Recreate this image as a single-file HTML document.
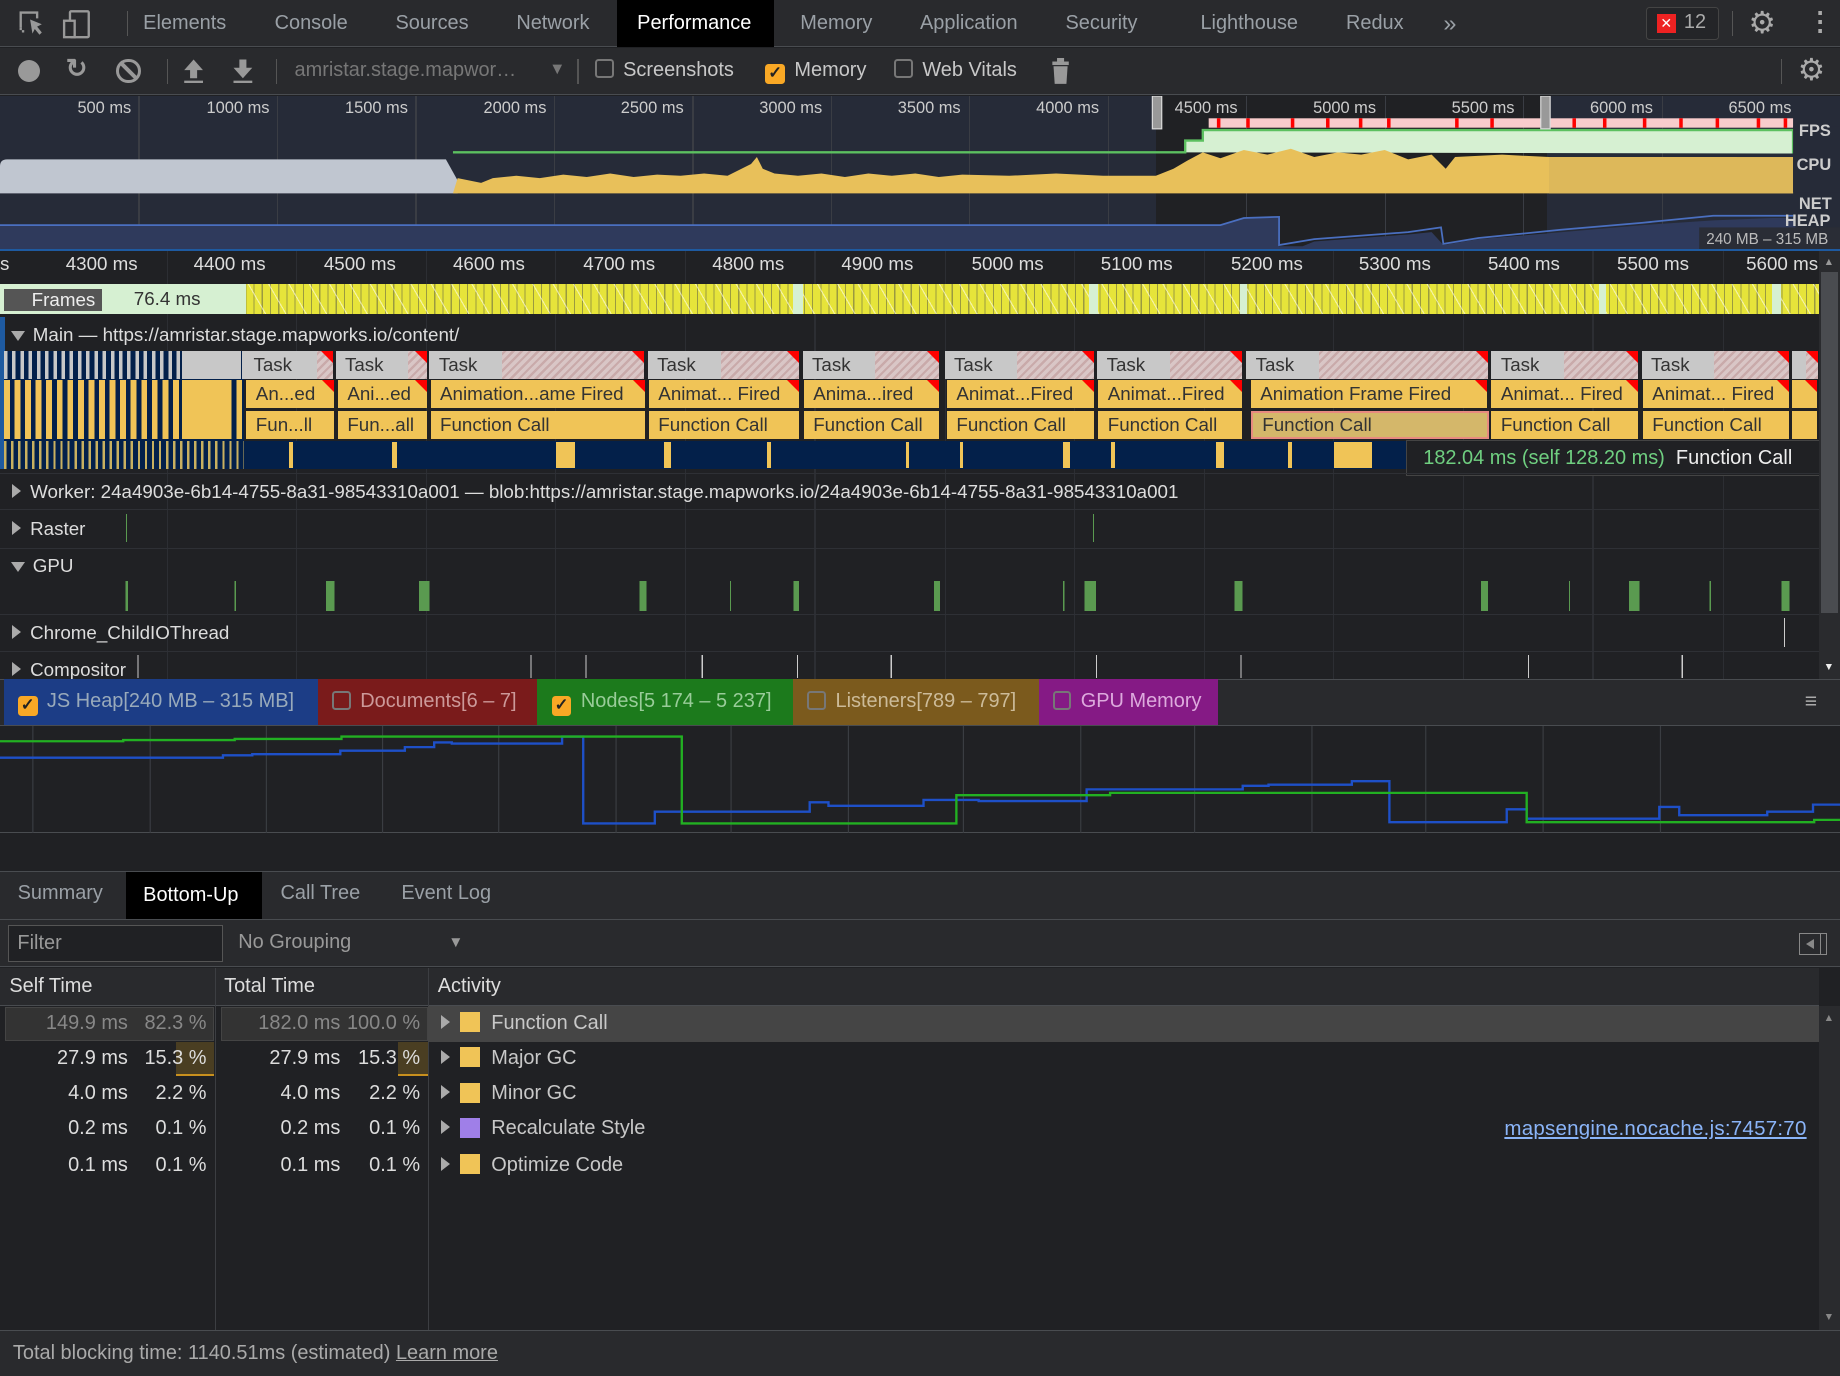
<!DOCTYPE html>
<html><head><meta charset="utf-8"><style>
*{box-sizing:border-box;margin:0;padding:0}
html,body{width:1840px;height:1376px;overflow:hidden;background:#202124}
#w{zoom:1.17347;width:1568px;height:1173px;position:relative;font-family:"Liberation Sans",sans-serif;color:#c8c8c8;font-size:17px;background:#202124;overflow:hidden}
.a{position:absolute;white-space:nowrap}
.tb{background:#292a2d}
.tab{position:absolute;top:0;height:40px;line-height:40px;color:#9aa0a6;font-size:17px}
.rl{position:absolute;font-size:14px;color:#ccc}
.vl{position:absolute;width:1px;background:#3a3d44}
.task{position:absolute;top:299px;height:24px;background:repeating-linear-gradient(135deg,#c9aaaa 0 2px,#d9c6c6 2px 5px);border-right:1px solid #202124}
.task span{display:block;width:62px;height:24px;background:#c8c8c8;color:#333;padding-left:8px;line-height:24px;font-size:16px}
.tri{position:absolute;right:0;top:0;width:0;height:0;border-top:11px solid #f00;border-left:11px solid transparent}
.y{position:absolute;height:24px;background:#f0c457;color:#333;font-size:16px;line-height:24px;padding-left:8px;overflow:hidden;border-right:2px solid #202124}
.hdr{position:absolute;left:0;font-size:16px;color:#ddd}
.ar{display:inline-block;width:0;height:0;border-left:8px solid #aaa;border-top:6px solid transparent;border-bottom:6px solid transparent;margin:0 8px 0 10px}
.ad{display:inline-block;width:0;height:0;border-top:9px solid #aaa;border-left:6px solid transparent;border-right:6px solid transparent;margin:0 7px 0 9px}
.cb{display:inline-block;width:16px;height:16px;border:2px solid #777;border-radius:3px;vertical-align:-2px;margin-right:8px}
.ck{display:inline-block;width:17px;height:17px;background:#f9a825;border-radius:3px;vertical-align:-2px;margin-right:8px;color:#222;font-size:14px;line-height:17px;text-align:center;font-weight:bold}
.cnt{position:absolute;top:579px;height:39px;line-height:39px;padding-left:12px;font-size:17px}
.row{position:absolute;left:0;width:1550px;height:30px;line-height:30px}
.num{position:absolute;text-align:right;color:#ddd}
.sq{display:inline-block;width:17px;height:17px;vertical-align:-3px;margin-right:10px}
</style></head><body><div id="w">

<!-- top tab bar -->
<div class="a tb" style="left:0;top:0;width:1568px;height:40px;border-bottom:1px solid #494c50"></div>
<svg class="a" style="left:14px;top:8px" width="80" height="26" viewBox="0 0 80 26"><path d="M4 16V3h14v5" fill="none" stroke="#999" stroke-width="2"/><path d="M4 16v3h4" fill="none" stroke="#999" stroke-width="2" stroke-dasharray="2 2"/><path d="M12 9l10 4-4 2 4 5-2 2-4-5-2 4z" fill="#999"/><rect x="46" y="2" width="16" height="22" rx="1" fill="none" stroke="#999" stroke-width="2"/><rect x="41" y="10" width="9" height="14" fill="#292a2d" stroke="#999" stroke-width="2"/></svg>
<div class="a" style="left:108px;top:9px;width:1px;height:22px;background:#555"></div>
<div class="tab" style="left:122px">Elements</div>
<div class="tab" style="left:234px">Console</div>
<div class="tab" style="left:337px">Sources</div>
<div class="tab" style="left:440px">Network</div>
<div class="tab" style="left:526px;width:134px;background:#000;color:#fff;padding-left:17px">Performance</div>
<div class="tab" style="left:682px">Memory</div>
<div class="tab" style="left:784px">Application</div>
<div class="tab" style="left:908px">Security</div>
<div class="tab" style="left:1023px">Lighthouse</div>
<div class="tab" style="left:1147px">Redux</div>
<div class="tab" style="left:1230px;font-size:20px">»</div>
<div class="a" style="left:1403px;top:6px;width:62px;height:28px;border:1px solid #444;border-radius:3px;background:#242528"></div>
<div class="a" style="left:1412px;top:12px;width:16px;height:16px;background:#e22;color:#fff;font-size:12px;line-height:16px;text-align:center">✕</div>
<div class="a" style="left:1435px;top:9px;font-size:17px;color:#aaa">12</div>
<div class="a" style="left:1476px;top:9px;width:1px;height:22px;background:#555"></div>
<div class="a" style="left:1490px;top:5px;font-size:26px;color:#aaa">⚙</div>
<div class="a" style="left:1540px;top:6px;font-size:22px;color:#aaa;font-weight:bold">⋮</div>

<!-- toolbar -->
<div class="a tb" style="left:0;top:41px;width:1568px;height:40px;border-bottom:1px solid #494c50"></div>
<div class="a" style="left:15px;top:51px;width:19px;height:19px;border-radius:50%;background:#999"></div>
<div class="a" style="left:56px;top:46px;font-size:22px;color:#999;font-weight:bold">↻</div>
<div class="a" style="left:99px;top:50px;width:21px;height:21px;border:3px solid #999;border-radius:50%"><div style="position:absolute;left:6px;top:-2px;width:3px;height:19px;background:#999;transform:rotate(-45deg)"></div></div>
<svg class="a" style="left:150px;top:48px" width="70" height="26"><path d="M15 3l-8 9h5v7h6v-7h5z" fill="#999"/><rect x="7" y="21" width="16" height="2" fill="#999"/><path d="M57 19l-8-9h5V3h6v7h5z" fill="#999"/><rect x="49" y="21" width="16" height="2" fill="#999"/></svg>
<div class="a" style="left:142px;top:50px;width:1px;height:22px;background:#555"></div>
<div class="a" style="left:235px;top:50px;width:1px;height:22px;background:#555"></div>
<div class="a" style="left:251px;top:50px;color:#777">amristar.stage.mapwor…</div>
<div class="a" style="left:468px;top:51px;color:#777;font-size:14px">▼</div>
<div class="a" style="left:492px;top:50px;width:1px;height:22px;background:#555"></div>
<div class="a" style="left:507px;top:50px"><span class="cb"></span>Screenshots</div>
<div class="a" style="left:652px;top:50px"><span class="ck">✓</span>Memory</div>
<div class="a" style="left:762px;top:50px"><span class="cb"></span>Web Vitals</div>
<svg class="a" style="left:895px;top:49px" width="18" height="24"><rect x="6" y="0" width="6" height="3" fill="#999"/><rect x="2" y="3" width="14" height="3" fill="#999"/><path d="M3 7h12l-1 15H4z" fill="#999"/></svg>
<div class="a" style="left:1518px;top:50px;width:1px;height:22px;background:#555"></div>
<div class="a" style="left:1532px;top:45px;font-size:26px;color:#aaa">⚙</div>

<!-- overview -->
<div class="a" style="left:0;top:82px;width:1568px;height:131px;background:#262b38"></div>
<div class="a" style="left:985px;top:82px;width:333px;height:131px;background:#202124"></div>
<div class="vl" style="left:118px;top:82px;height:131px"></div><div class="vl" style="left:236px;top:82px;height:131px"></div><div class="vl" style="left:354px;top:82px;height:131px"></div><div class="vl" style="left:472px;top:82px;height:131px"></div><div class="vl" style="left:590px;top:82px;height:131px"></div><div class="vl" style="left:708px;top:82px;height:131px"></div><div class="vl" style="left:826px;top:82px;height:131px"></div><div class="vl" style="left:944px;top:82px;height:131px"></div><div class="vl" style="left:1062px;top:82px;height:131px"></div><div class="vl" style="left:1180px;top:82px;height:131px"></div><div class="vl" style="left:1298px;top:82px;height:131px"></div><div class="vl" style="left:1416px;top:82px;height:131px"></div>
<div class="rl" style="left:66px;top:84px">500 ms</div><div class="rl" style="left:176px;top:84px">1000 ms</div><div class="rl" style="left:294px;top:84px">1500 ms</div><div class="rl" style="left:412px;top:84px">2000 ms</div><div class="rl" style="left:529px;top:84px">2500 ms</div><div class="rl" style="left:647px;top:84px">3000 ms</div><div class="rl" style="left:765px;top:84px">3500 ms</div><div class="rl" style="left:883px;top:84px">4000 ms</div><div class="rl" style="left:1001px;top:84px">4500 ms</div><div class="rl" style="left:1119px;top:84px">5000 ms</div><div class="rl" style="left:1237px;top:84px">5500 ms</div><div class="rl" style="left:1355px;top:84px">6000 ms</div><div class="rl" style="left:1473px;top:84px">6500 ms</div>
<svg class="a" style="left:0;top:82px" width="1568" height="131">
<rect x="1030" y="19" width="498" height="8" fill="#f8cccc"/>
<g fill="#f00"><rect x="1037" y="19" width="3" height="8"/><rect x="1062" y="19" width="3" height="8"/><rect x="1100" y="19" width="3" height="8"/><rect x="1130" y="19" width="3" height="8"/><rect x="1158" y="19" width="3" height="8"/><rect x="1182" y="19" width="3" height="8"/><rect x="1240" y="19" width="3" height="8"/><rect x="1270" y="19" width="3" height="8"/><rect x="1340" y="19" width="3" height="8"/><rect x="1366" y="19" width="3" height="8"/><rect x="1400" y="19" width="3" height="8"/><rect x="1431" y="19" width="3" height="8"/><rect x="1462" y="19" width="3" height="8"/><rect x="1497" y="19" width="3" height="8"/><rect x="1520" y="19" width="3" height="8"/></g>
<path d="M1010 48V38h15V29h503v20z" fill="#d6f0d2"/>
<path d="M386 48H1010V38h15V29h503v20" fill="none" stroke="#5cc060" stroke-width="2"/>
<path d="M0 60Q0 54 6 54H380L390 72V83H0z" fill="#c0c6d0"/>
<path d="M386 83L390 70 400 72 410 74 420 70 440 68 460 70 480 67 500 69 520 66 540 69 560 67 580 68 600 66 620 68 640 58 645 52 650 62 660 66 680 68 700 66 720 69 740 66 760 68 780 66 800 69 820 67 860 68 900 66 940 68 985 68 1000 62 1012 55 1025 48 1040 53 1060 46 1080 50 1100 45 1120 52 1140 48 1160 50 1180 46 1200 54 1220 50 1232 62 1240 52 1280 50 1320 52 1400 52 1480 52 1495 70 1528 70 1528 83z" fill="#e8c05a"/>
<rect x="1320" y="52" width="208" height="31" fill="#ddb85a"/>
<path d="M0 110H1040L1060 104H1090V128H1110L1120 124 1200 118 1220 116 1230 127 1260 122 1320 117 1400 110 1460 106 1510 104 1530 104V131H0z" fill="#2f3a5c"/>
<path d="M0 110H1040L1060 104 1090 103V127L1120 122 1200 116 1228 112 1230 126 1260 121 1330 114 1400 108 1460 102 1528 102" fill="none" stroke="#4a6fc0" stroke-width="1.5"/>
<rect x="982" y="0" width="8" height="28" fill="#999" stroke="#ddd"/>
<rect x="1313" y="0" width="8" height="28" fill="#999" stroke="#ddd"/>
<rect x="1528" y="26" width="40" height="56" fill="#262b38"/>
<rect x="1448" y="112" width="120" height="19" fill="#2a2d36"/>
</svg>
<div class="a" style="left:1533px;top:104px;font-size:14px;color:#ccc;font-weight:bold">FPS</div>
<div class="a" style="left:1531px;top:133px;font-size:14px;color:#ccc;font-weight:bold">CPU</div>
<div class="a" style="left:1533px;top:166px;font-size:14px;color:#ccc;font-weight:bold">NET</div>
<div class="a" style="left:1521px;top:181px;font-size:14px;color:#ccc;font-weight:bold">HEAP</div>
<div class="a" style="left:1454px;top:197px;font-size:13px;color:#bbb">240 MB – 315 MB</div>
<div class="a" style="left:0;top:212px;width:1568px;height:2px;background:#1e5aa0"></div>

<!-- detail ruler -->
<div class="a" style="left:0;top:214px;width:1550px;height:28px;background:#202124"></div>
<div class="vl" style="left:142px;top:214px;height:366px;background:#2c2e33"></div><div class="vl" style="left:252px;top:214px;height:366px;background:#2c2e33"></div><div class="vl" style="left:363px;top:214px;height:366px;background:#2c2e33"></div><div class="vl" style="left:473px;top:214px;height:366px;background:#2c2e33"></div><div class="vl" style="left:584px;top:214px;height:366px;background:#2c2e33"></div><div class="vl" style="left:694px;top:214px;height:366px;background:#2c2e33"></div><div class="vl" style="left:805px;top:214px;height:366px;background:#2c2e33"></div><div class="vl" style="left:915px;top:214px;height:366px;background:#2c2e33"></div><div class="vl" style="left:1026px;top:214px;height:366px;background:#2c2e33"></div><div class="vl" style="left:1136px;top:214px;height:366px;background:#2c2e33"></div><div class="vl" style="left:1247px;top:214px;height:366px;background:#2c2e33"></div><div class="vl" style="left:1357px;top:214px;height:366px;background:#2c2e33"></div><div class="vl" style="left:1468px;top:214px;height:366px;background:#2c2e33"></div>
<div class="a" style="left:0;top:216px;font-size:16px;color:#ddd">s</div>
<div class="a" style="left:56px;top:216px;font-size:16px;color:#ddd">4300 ms</div><div class="a" style="left:165px;top:216px;font-size:16px;color:#ddd">4400 ms</div><div class="a" style="left:276px;top:216px;font-size:16px;color:#ddd">4500 ms</div><div class="a" style="left:386px;top:216px;font-size:16px;color:#ddd">4600 ms</div><div class="a" style="left:497px;top:216px;font-size:16px;color:#ddd">4700 ms</div><div class="a" style="left:607px;top:216px;font-size:16px;color:#ddd">4800 ms</div><div class="a" style="left:717px;top:216px;font-size:16px;color:#ddd">4900 ms</div><div class="a" style="left:828px;top:216px;font-size:16px;color:#ddd">5000 ms</div><div class="a" style="left:938px;top:216px;font-size:16px;color:#ddd">5100 ms</div><div class="a" style="left:1049px;top:216px;font-size:16px;color:#ddd">5200 ms</div><div class="a" style="left:1158px;top:216px;font-size:16px;color:#ddd">5300 ms</div><div class="a" style="left:1268px;top:216px;font-size:16px;color:#ddd">5400 ms</div><div class="a" style="left:1378px;top:216px;font-size:16px;color:#ddd">5500 ms</div><div class="a" style="left:1488px;top:216px;font-size:16px;color:#ddd">5600 ms</div>

<!-- frames -->
<div class="a" style="left:0;top:242px;width:1550px;height:26px;background:repeating-linear-gradient(90deg,#e6e43a 0 6px,#9a9a40 6px 7px)"></div>
<div class="a" style="left:210px;top:242px;width:1340px;height:26px;background:repeating-linear-gradient(60deg,transparent 0 14px,rgba(255,255,255,.55) 14px 15px)"></div>
<div class="a" style="left:0;top:242px;width:210px;height:26px;background:#d6f0d2"></div>
<div class="a" style="left:3px;top:246px;width:84px;height:19px;background:#555;color:#eee;font-size:16px;line-height:19px;padding-left:24px">Frames</div>
<div class="a" style="left:114px;top:245px;font-size:16px;color:#333">76.4 ms</div>
<div class="a" style="left:676px;top:242px;width:8px;height:26px;background:#d6f0d2"></div><div class="a" style="left:928px;top:242px;width:8px;height:26px;background:#d6f0d2"></div><div class="a" style="left:1057px;top:242px;width:6px;height:26px;background:#d6f0d2"></div><div class="a" style="left:1363px;top:242px;width:6px;height:26px;background:#d6f0d2"></div><div class="a" style="left:1510px;top:242px;width:8px;height:26px;background:#d6f0d2"></div>

<!-- main -->
<div class="a" style="left:0;top:270px;width:4px;height:130px;background:#1e5aa0"></div>
<div class="hdr" style="top:276px"><span class="ad"></span>Main — https://amristar.stage.mapworks.io/content/</div>
<div class="a" style="left:3px;top:299px;width:205px;height:101px;background:#03204a"></div>
<div class="a" style="left:3px;top:299px;width:205px;height:24px;background:repeating-linear-gradient(90deg,#c8c8c8 0 3px,#03204a 3px 7px)"></div>
<div class="a" style="left:155px;top:299px;width:50px;height:24px;background:#c8c8c8"></div>
<div class="a" style="left:3px;top:324px;width:205px;height:50px;background:repeating-linear-gradient(90deg,#f0c457 0 5px,#03204a 5px 9px)"></div>
<div class="a" style="left:155px;top:324px;width:40px;height:50px;background:#f0c457"></div>
<div class="a" style="left:3px;top:376px;width:1200px;height:24px;background:#03204a"></div>
<div class="a" style="left:3px;top:376px;width:205px;height:24px;background:repeating-linear-gradient(90deg,#c8b060 0 2px,#03204a 2px 6px)"></div>

<div class="task" style="left:208px;width:77px"><span>Task</span><i class="tri"></i></div>
<div class="task" style="left:286px;width:79px"><span>Task</span><i class="tri"></i></div>
<div class="task" style="left:366px;width:184px"><span>Task</span><i class="tri"></i></div>
<div class="task" style="left:552px;width:130px"><span>Task</span><i class="tri"></i></div>
<div class="task" style="left:684px;width:117px"><span>Task</span><i class="tri"></i></div>
<div class="task" style="left:805px;width:128px"><span>Task</span><i class="tri"></i></div>
<div class="task" style="left:935px;width:124px"><span>Task</span><i class="tri"></i></div>
<div class="task" style="left:1062px;width:207px"><span>Task</span><i class="tri"></i></div>
<div class="task" style="left:1271px;width:126px"><span>Task</span><i class="tri"></i></div>
<div class="task" style="left:1399px;width:126px"><span>Task</span><i class="tri"></i></div>
<div class="task" style="left:1527px;width:23px"><span style="width:12px;padding:0"></span><i class="tri"></i></div>

<div class="y" style="top:324px;left:210px;width:76px">An...ed<i class="tri"></i></div>
<div class="y" style="top:324px;left:288px;width:78px">Ani...ed<i class="tri"></i></div>
<div class="y" style="top:324px;left:367px;width:184px">Animation...ame Fired<i class="tri"></i></div>
<div class="y" style="top:324px;left:553px;width:130px">Animat... Fired<i class="tri"></i></div>
<div class="y" style="top:324px;left:685px;width:117px">Anima...ired<i class="tri"></i></div>
<div class="y" style="top:324px;left:807px;width:127px">Animat...Fired<i class="tri"></i></div>
<div class="y" style="top:324px;left:936px;width:124px">Animat...Fired<i class="tri"></i></div>
<div class="y" style="top:324px;left:1066px;width:203px">Animation Frame Fired<i class="tri"></i></div>
<div class="y" style="top:324px;left:1271px;width:127px">Animat... Fired<i class="tri"></i></div>
<div class="y" style="top:324px;left:1400px;width:126px">Animat... Fired<i class="tri"></i></div>
<div class="y" style="top:324px;left:1527px;width:23px"><i class="tri"></i></div>

<div class="y" style="top:350px;left:210px;width:76px">Fun...ll</div>
<div class="y" style="top:350px;left:288px;width:78px">Fun...all</div>
<div class="y" style="top:350px;left:367px;width:184px">Function Call</div>
<div class="y" style="top:350px;left:553px;width:130px">Function Call</div>
<div class="y" style="top:350px;left:685px;width:117px">Function Call</div>
<div class="y" style="top:350px;left:807px;width:127px">Function Call</div>
<div class="y" style="top:350px;left:936px;width:124px">Function Call</div>
<div class="y" style="top:350px;left:1066px;width:203px;background:#d4b76a;border:2px solid #e88a80;line-height:20px">Function Call</div>
<div class="y" style="top:350px;left:1271px;width:127px">Function Call</div>
<div class="y" style="top:350px;left:1400px;width:126px">Function Call</div>
<div class="y" style="top:350px;left:1527px;width:23px"></div>

<div class="a" style="left:246px;top:377px;width:4px;height:22px;background:#f0c457"></div><div class="a" style="left:334px;top:377px;width:4px;height:22px;background:#f0c457"></div><div class="a" style="left:474px;top:377px;width:16px;height:22px;background:#f0c457"></div><div class="a" style="left:566px;top:377px;width:6px;height:22px;background:#f0c457"></div><div class="a" style="left:654px;top:377px;width:3px;height:22px;background:#f0c457"></div><div class="a" style="left:772px;top:377px;width:3px;height:22px;background:#f0c457"></div><div class="a" style="left:818px;top:377px;width:3px;height:22px;background:#f0c457"></div><div class="a" style="left:906px;top:377px;width:6px;height:22px;background:#f0c457"></div><div class="a" style="left:947px;top:377px;width:3px;height:22px;background:#f0c457"></div><div class="a" style="left:1036px;top:377px;width:7px;height:22px;background:#f0c457"></div><div class="a" style="left:1098px;top:377px;width:3px;height:22px;background:#f0c457"></div><div class="a" style="left:1137px;top:377px;width:32px;height:22px;background:#f0c457"></div>
<div class="a" style="left:1198px;top:375px;width:362px;height:31px;background:#202124;border:1px solid #444;color:#eee;font-size:17px;line-height:29px;padding-left:14px"><span style="color:#6fcf80">182.04 ms (self 128.20 ms)</span>&nbsp; Function Call</div>

<!-- other tracks -->
<div class="a" style="left:0;top:403px;width:1550px;height:1px;background:#2e3035"></div>
<div class="hdr" style="top:410px"><span class="ar"></span>Worker: 24a4903e-6b14-4755-8a31-98543310a001 — blob:https://amristar.stage.mapworks.io/24a4903e-6b14-4755-8a31-98543310a001</div>
<div class="a" style="left:0;top:434px;width:1550px;height:1px;background:#2e3035"></div>
<div class="hdr" style="top:441px"><span class="ar"></span>Raster</div>
<div class="a" style="left:107px;top:438px;width:1px;height:24px;background:#5a9a50"></div><div class="a" style="left:931px;top:438px;width:1px;height:24px;background:#5a9a50"></div>
<div class="a" style="left:0;top:467px;width:1550px;height:1px;background:#2e3035"></div>
<div class="hdr" style="top:473px"><span class="ad"></span>GPU</div>
<div class="a" style="left:0;top:495px;width:1550px;height:26px;background:linear-gradient(90deg,transparent 107px,#5a9a50 107px 109px,transparent 109px 200px,#5a9a50 200px 201px,transparent 201px 278px,#5a9a50 278px 285px,transparent 285px 357px,#5a9a50 357px 366px,transparent 366px 545px,#5a9a50 545px 551px,transparent 551px 622px,#5a9a50 622px 623px,transparent 623px 676px,#5a9a50 676px 681px,transparent 681px 796px,#5a9a50 796px 801px,transparent 801px 906px,#5a9a50 906px 907px,transparent 907px 924px,#5a9a50 924px 934px,transparent 934px 1052px,#5a9a50 1052px 1059px,transparent 1059px 1262px,#5a9a50 1262px 1268px,transparent 1268px 1337px,#5a9a50 1337px 1338px,transparent 1338px 1388px,#5a9a50 1388px 1397px,transparent 1397px 1457px,#5a9a50 1457px 1458px,transparent 1458px 1518px,#5a9a50 1518px 1525px,transparent 1525px)"></div>
<div class="a" style="left:0;top:523px;width:1550px;height:1px;background:#2e3035"></div>
<div class="hdr" style="top:530px"><span class="ar"></span>Chrome_ChildIOThread</div>
<div class="a" style="left:1520px;top:527px;width:1px;height:24px;background:#ccc"></div>
<div class="a" style="left:0;top:555px;width:1550px;height:1px;background:#2e3035"></div>
<div class="hdr" style="top:562px"><span class="ar"></span>Compositor</div>
<div class="a" style="left:0;top:558px;width:1550px;height:20px;background:linear-gradient(90deg,transparent 117px,#ccc 117px 118px,transparent 118px 452px,#ccc 452px 453px,transparent 453px 499px,#ccc 499px 500px,transparent 500px 598px,#ccc 598px 599px,transparent 599px 679px,#ccc 679px 680px,transparent 680px 759px,#ccc 759px 760px,transparent 760px 934px,#ccc 934px 935px,transparent 935px 1057px,#ccc 1057px 1058px,transparent 1058px 1302px,#ccc 1302px 1303px,transparent 1303px 1433px,#ccc 1433px 1434px,transparent 1434px)"></div>
<div class="a" style="left:1550px;top:214px;width:18px;height:365px;background:#2a2b2e"></div>
<div class="a" style="left:1552px;top:232px;width:14px;height:290px;background:#4a4c50"></div>
<div class="a" style="left:1554px;top:218px;font-size:9px;color:#999">▲</div><div class="a" style="left:1554px;top:563px;font-size:9px;color:#eee">▼</div>

<!-- counters -->
<div class="a tb" style="left:0;top:579px;width:1568px;height:40px;border-top:1px solid #494c50;border-bottom:1px solid #494c50"></div>
<div class="cnt" style="left:3px;width:268px;background:#1c3d86;color:#9ab"><span class="ck">✓</span>JS Heap[240 MB – 315 MB]</div>
<div class="cnt" style="left:271px;width:187px;background:#7a1b1b;color:#c99"><span class="cb"></span>Documents[6 – 7]</div>
<div class="cnt" style="left:458px;width:218px;background:#1c7a1c;color:#9c9"><span class="ck">✓</span>Nodes[5 174 – 5 237]</div>
<div class="cnt" style="left:676px;width:209px;background:#7b5a1d;color:#cb9"><span class="cb"></span>Listeners[789 – 797]</div>
<div class="cnt" style="left:885px;width:153px;background:#851a85;color:#dad"><span class="cb"></span>GPU Memory</div>
<div class="a" style="left:1538px;top:588px;color:#aaa;font-size:18px">≡</div>

<!-- memory graph -->
<div class="a" style="left:0;top:619px;width:1568px;height:91px;background:#202124;border-bottom:1px solid #494c50"></div>
<svg class="a" style="left:0;top:619px" width="1568" height="91">
<g stroke="#3a3d42"><line x1="28" y1="0" x2="28" y2="91"/><line x1="128" y1="0" x2="128" y2="91"/><line x1="227" y1="0" x2="227" y2="91"/><line x1="326" y1="0" x2="326" y2="91"/><line x1="425" y1="0" x2="425" y2="91"/><line x1="525" y1="0" x2="525" y2="91"/><line x1="623" y1="0" x2="623" y2="91"/><line x1="723" y1="0" x2="723" y2="91"/><line x1="821" y1="0" x2="821" y2="91"/><line x1="921" y1="0" x2="921" y2="91"/><line x1="1018" y1="0" x2="1018" y2="91"/><line x1="1118" y1="0" x2="1118" y2="91"/><line x1="1215" y1="0" x2="1215" y2="91"/><line x1="1315" y1="0" x2="1315" y2="91"/><line x1="1415" y1="0" x2="1415" y2="91"/></g>
<path d="M0 27H190V25H215V24H290V21H345V18H370V14H385V15H479V9H497V83H558V73H690V65H706V68H787V63H834V64H926V54H1059V51H1081V50H1152V47H1184V82H1284V71H1301V79H1414V69H1431V76H1506V73H1545V67H1568" fill="none" stroke="#1e50c8" stroke-width="2"/>
<path d="M0 13H105V12H200V11H291V9H581V83H815V59H946V57H1301V82H1546V80H1568" fill="none" stroke="#22b022" stroke-width="2"/>
</svg>

<!-- bottom panel -->
<div class="a tb" style="left:0;top:742px;width:1568px;height:42px;border-top:1px solid #494c50;border-bottom:1px solid #494c50"></div>
<div class="a" style="left:15px;top:752px;color:#9aa0a6">Summary</div>
<div class="a" style="left:107px;top:743px;width:116px;height:40px;background:#000;color:#fff;line-height:40px;padding-left:15px">Bottom-Up</div>
<div class="a" style="left:239px;top:752px;color:#9aa0a6">Call Tree</div>
<div class="a" style="left:342px;top:752px;color:#9aa0a6">Event Log</div>
<div class="a tb" style="left:0;top:784px;width:1568px;height:40px;border-bottom:1px solid #494c50"></div>
<div class="a" style="left:7px;top:788px;width:183px;height:32px;border:1px solid #555;background:#202124;color:#999;line-height:30px;padding-left:7px">Filter</div>
<div class="a" style="left:203px;top:793px;color:#999">No Grouping</div>
<div class="a" style="left:382px;top:796px;color:#999;font-size:13px">▼</div>
<div class="a" style="left:1533px;top:795px;width:24px;height:19px;border:1px solid #888"><div style="position:absolute;right:4px;top:0;width:1px;height:17px;background:#888"></div><div style="position:absolute;left:5px;top:4px;border-right:7px solid #888;border-top:5px solid transparent;border-bottom:5px solid transparent"></div></div>

<div class="a tb" style="left:0;top:825px;width:1550px;height:32px;border-bottom:1px solid #494c50"></div>
<div class="a" style="left:8px;top:831px;color:#ddd">Self Time</div>
<div class="a" style="left:191px;top:831px;color:#ddd">Total Time</div>
<div class="a" style="left:373px;top:831px;color:#ddd">Activity</div>
<div class="a" style="left:183px;top:825px;width:1px;height:308px;background:#3c3e42"></div>
<div class="a" style="left:365px;top:825px;width:1px;height:308px;background:#3c3e42"></div>

<div class="a" style="left:365px;top:857px;width:1185px;height:31px;background:#454545"></div>
<div class="a" style="left:4px;top:858px;width:178px;height:29px;background:#333;border:1px solid #444"></div>
<div class="a" style="left:188px;top:858px;width:177px;height:29px;background:#333;border:1px solid #444"></div>
<div class="row" style="top:857px"><span class="num" style="right:1441px;color:#888">149.9 ms</span><span class="num" style="right:1374px;color:#888">82.3 %</span><span class="num" style="right:1260px;color:#888">182.0 ms</span><span class="num" style="right:1192px;color:#888">100.0 %</span><span class="a" style="left:366px"><span class="ar"></span><span class="sq" style="background:#f0c457"></span>Function Call</span></div>
<div class="a" style="left:150px;top:888px;width:32px;height:29px;background:#4a3e22;border-bottom:2px solid #c8901e"></div>
<div class="a" style="left:339px;top:888px;width:26px;height:29px;background:#4a3e22;border-bottom:2px solid #c8901e"></div>
<div class="row" style="top:887px"><span class="num" style="right:1441px">27.9 ms</span><span class="num" style="right:1374px">15.3 %</span><span class="num" style="right:1260px">27.9 ms</span><span class="num" style="right:1192px">15.3 %</span><span class="a" style="left:366px"><span class="ar"></span><span class="sq" style="background:#f0c457"></span>Major GC</span></div>
<div class="row" style="top:917px"><span class="num" style="right:1441px">4.0 ms</span><span class="num" style="right:1374px">2.2 %</span><span class="num" style="right:1260px">4.0 ms</span><span class="num" style="right:1192px">2.2 %</span><span class="a" style="left:366px"><span class="ar"></span><span class="sq" style="background:#f0c457"></span>Minor GC</span></div>
<div class="row" style="top:947px"><span class="num" style="right:1441px">0.2 ms</span><span class="num" style="right:1374px">0.1 %</span><span class="num" style="right:1260px">0.2 ms</span><span class="num" style="right:1192px">0.1 %</span><span class="a" style="left:366px"><span class="ar"></span><span class="sq" style="background:#9f7fe8"></span>Recalculate Style</span><span class="a" style="left:1282px;color:#8ab4f8;text-decoration:underline;font-size:17.5px;letter-spacing:0.2px">mapsengine.nocache.js:7457:70</span></div>
<div class="row" style="top:978px"><span class="num" style="right:1441px">0.1 ms</span><span class="num" style="right:1374px">0.1 %</span><span class="num" style="right:1260px">0.1 ms</span><span class="num" style="right:1192px">0.1 %</span><span class="a" style="left:366px"><span class="ar"></span><span class="sq" style="background:#f0c457"></span>Optimize Code</span></div>
<div class="a" style="left:1550px;top:857px;width:18px;height:276px;background:#2a2b2e"></div>
<div class="a" style="left:1554px;top:862px;font-size:9px;color:#888">▲</div><div class="a" style="left:1554px;top:1117px;font-size:9px;color:#888">▼</div>

<div class="a tb" style="left:0;top:1133px;width:1568px;height:40px;border-top:1px solid #494c50"></div>
<div class="a" style="left:11px;top:1144px;color:#aaa">Total blocking time: 1140.51ms (estimated) <span style="text-decoration:underline">Learn more</span></div>
</div></body></html>
